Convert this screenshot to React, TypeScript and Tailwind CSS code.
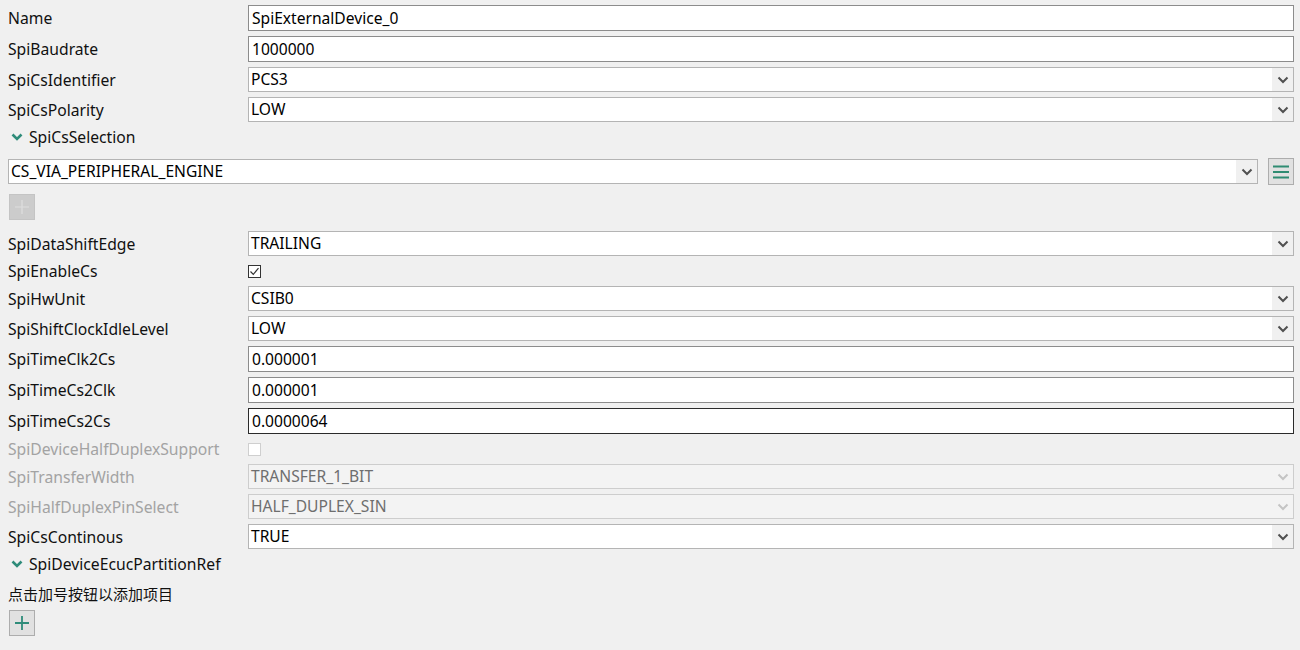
import React from "react"

const font = { fontFamily: '"Microsoft YaHei", "Noto Sans", "Noto Sans CJK SC", sans-serif' }

function Chevron({ disabled }: { disabled?: boolean }) {
  return (
    <svg width="12" height="8" viewBox="0 0 12 8">
      <path d="M1.5 1.5 L6 6 L10.5 1.5" fill="none" stroke={disabled ? "#c4c4c4" : "#505050"} strokeWidth="2" />
    </svg>
  )
}

function Label({ text, disabled }: { text: string; disabled?: boolean }) {
  return (
    <div className={`w-[240px] shrink-0 pt-[2px] text-[15.7px] leading-none ${disabled ? "text-[#a3a3a3]" : "text-[#111]"}`}>{text}</div>
  )
}

function TextRow({ label, value, focused }: { label: string; value: string; focused?: boolean }) {
  return (
    <div className="flex items-center h-[26px]">
      <Label text={label} />
      <div
        className={`flex-1 h-full flex items-center bg-white border px-[3px] pt-[1px] text-[15.6px] text-black ${
          focused ? "border-[#2b2b2b]" : "border-[#8c8c8c]"
        }`}
      >
        {value}
      </div>
    </div>
  )
}

function SelectBox({ value, disabled, className = "" }: { value: string; disabled?: boolean; className?: string }) {
  return (
    <div
      className={`h-[25px] flex items-center border text-[15.6px] ${
        disabled ? "bg-[#f3f3f3] border-[#cdcdcd] text-[#6e6e6e]" : "bg-white border-[#b4b4b4] text-black"
      } ${className}`}
    >
      <div className="flex-1 pl-[2px] pt-[1px] truncate">{value}</div>
      <div className={`w-[21px] h-full flex items-center justify-center ${disabled ? "bg-[#f3f3f3]" : "bg-[#f0f0f0]"}`}>
        <Chevron disabled={disabled} />
      </div>
    </div>
  )
}

function SelectRow({ label, value, disabled }: { label: string; value: string; disabled?: boolean }) {
  return (
    <div className="flex items-center h-[25px]">
      <Label text={label} disabled={disabled} />
      <SelectBox value={value} disabled={disabled} className="flex-1" />
    </div>
  )
}

function CheckRow({ label, checked, disabled }: { label: string; checked?: boolean; disabled?: boolean }) {
  return (
    <div className="flex items-center h-[20px]">
      <Label text={label} disabled={disabled} />
      <div
        className={`w-[13px] h-[13px] border bg-white flex items-center justify-center ${
          disabled ? "border-[#cfcfcf]" : "border-[#333]"
        }`}
      >
        {checked && (
          <svg width="11" height="11" viewBox="0 0 11 11">
            <path d="M1.5 5.5 L4.3 8.3 L9.5 2.2" fill="none" stroke="#333" strokeWidth="1.2" />
          </svg>
        )}
      </div>
    </div>
  )
}

function SectionHeader({ text }: { text: string }) {
  return (
    <div className="flex items-center h-[22px] pl-[2px]">
      <svg width="14" height="10" viewBox="0 0 14 10" className="mr-[5px]">
        <path d="M2.5 2.5 L7 7 L11.5 2.5" fill="none" stroke="#2f8c7a" strokeWidth="2.6" />
      </svg>
      <span className="pt-[2px] text-[15.7px] leading-none text-[#111]">{text}</span>
    </div>
  )
}

function PlusButton({ disabled }: { disabled?: boolean }) {
  return (
    <div
      className={`w-[26px] h-[26px] border flex items-center justify-center ${
        disabled ? "bg-[#cccccc] border-[#c4c4c4]" : "bg-[#e1e1e1] border-[#adadad]"
      }`}
    >
      <svg width="16" height="16" viewBox="0 0 16 16">
        <path d="M8 1 V15 M1 8 H15" stroke={disabled ? "#dedede" : "#2f8c7a"} strokeWidth={disabled ? 1.2 : 1.8} />
      </svg>
    </div>
  )
}

export default function App() {
  return (
    <div className="w-[1300px] h-[650px] bg-[#f0f0f0] overflow-hidden pl-[8px] pr-[6px] pt-[5px]" style={font}>
      <div className="flex flex-col gap-[5px]">
        <TextRow label="Name" value="SpiExternalDevice_0" />
        <TextRow label="SpiBaudrate" value="1000000" />
        <SelectRow label="SpiCsIdentifier" value="PCS3" />
        <SelectRow label="SpiCsPolarity" value="LOW" />
      </div>

      <div className="mt-[4px]">
        <SectionHeader text="SpiCsSelection" />
      </div>

      <div className="mt-[10px] flex items-center">
        <SelectBox value="CS_VIA_PERIPHERAL_ENGINE" className="flex-1" />
        <div className="ml-[10px] w-[26px] h-[27px] bg-[#e1e1e1] border border-[#adadad] flex items-center justify-center">
          <svg width="18" height="16" viewBox="0 0 18 16">
            <path d="M1 2.5 H17 M1 8 H17 M1 13.5 H17" stroke="#2f8c72" strokeWidth="2.2" />
          </svg>
        </div>
      </div>

      <div className="mt-[9px] pl-[1px]">
        <PlusButton disabled />
      </div>

      <div className="mt-[11px] flex flex-col gap-[5px]">
        <SelectRow label="SpiDataShiftEdge" value="TRAILING" />
        <CheckRow label="SpiEnableCs" checked />
        <SelectRow label="SpiHwUnit" value="CSIB0" />
        <SelectRow label="SpiShiftClockIdleLevel" value="LOW" />
        <TextRow label="SpiTimeClk2Cs" value="0.000001" />
        <TextRow label="SpiTimeCs2Clk" value="0.000001" />
        <TextRow label="SpiTimeCs2Cs" value="0.0000064" focused />
        <CheckRow label="SpiDeviceHalfDuplexSupport" disabled />
        <SelectRow label="SpiTransferWidth" value="TRANSFER_1_BIT" disabled />
        <SelectRow label="SpiHalfDuplexPinSelect" value="HALF_DUPLEX_SIN" disabled />
        <SelectRow label="SpiCsContinous" value="TRUE" />
      </div>

      <div className="mt-[4px]">
        <SectionHeader text="SpiDeviceEcucPartitionRef" />
      </div>

      <div className="mt-[9px] h-[20px] flex items-center text-[15px] text-[#111]">点击加号按钮以添加项目</div>

      <div className="mt-[6px] pl-[1px]">
        <PlusButton />
      </div>
    </div>
  )
}
